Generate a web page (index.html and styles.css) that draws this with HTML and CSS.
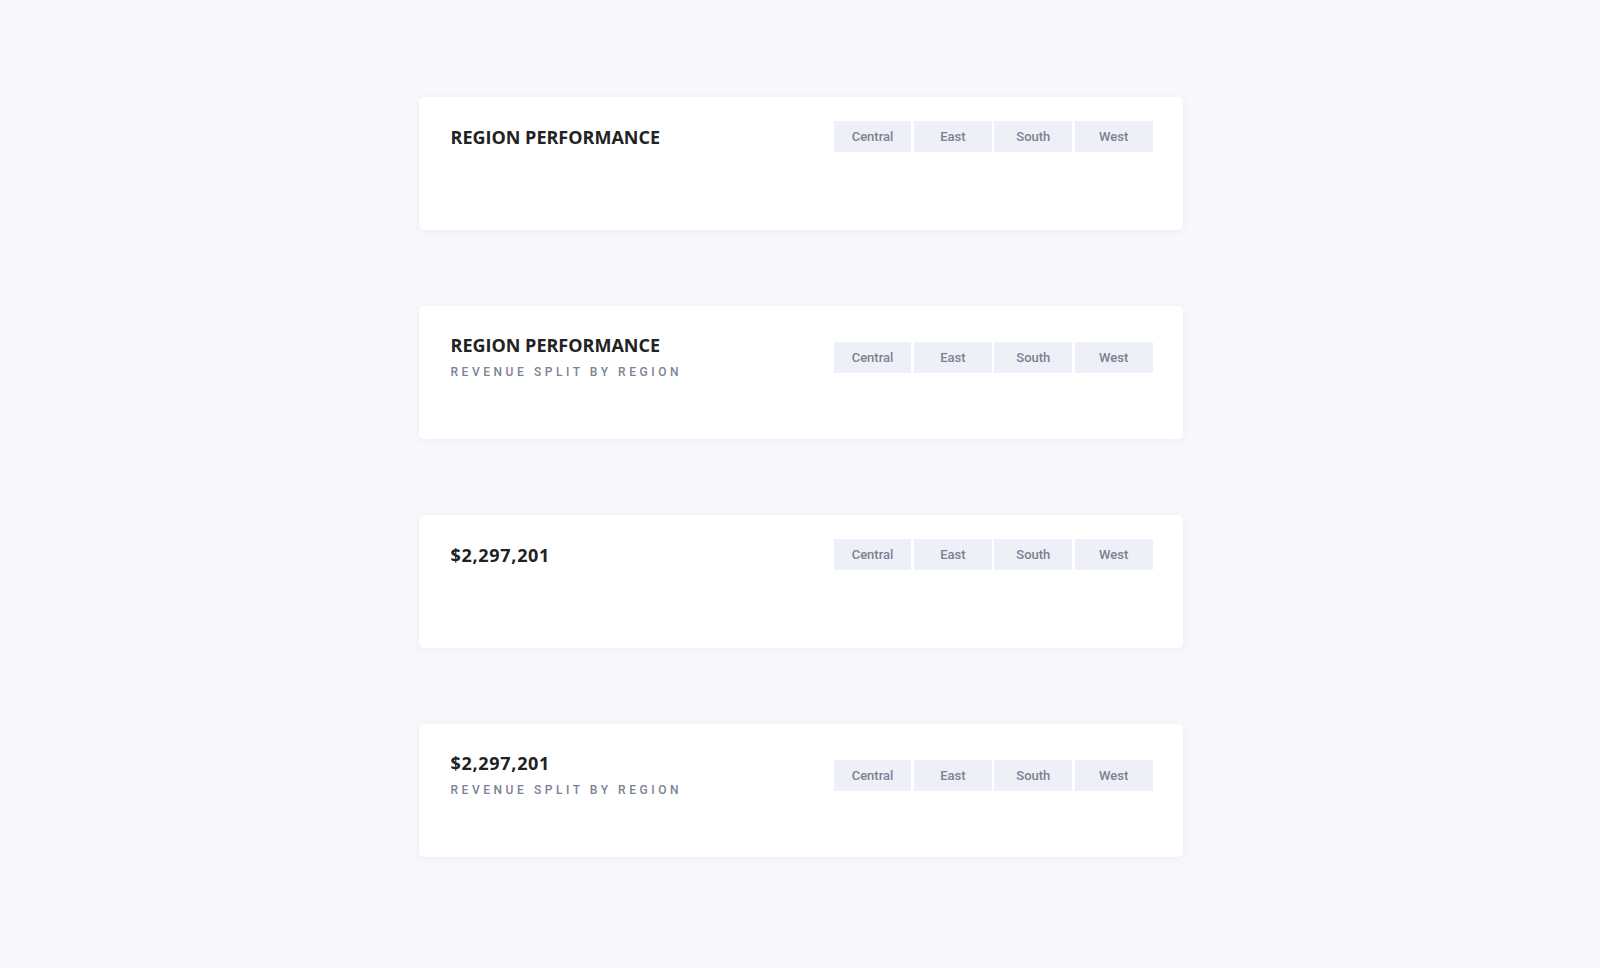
FILE: index.html
```html
<!DOCTYPE html>
<html>
<head>
<meta charset="UTF-8">
<title>Region performance</title>
<link rel="stylesheet" href="styles.css">
</head>
<body>
	<div class="page">
		<div class="card">
			<div class="head">
				<div class="titles">
					<div class="title">REGION PERFORMANCE</div>
				</div>
				<div class="tabs">
					<a class="tab">Central</a>
					<a class="tab">East</a>
					<a class="tab">South</a>
					<a class="tab">West</a>
				</div>
			</div>
		</div>
		<div class="card">
			<div class="head">
				<div class="titles">
					<div class="title">REGION PERFORMANCE</div>
					<div class="subtitle">REVENUE SPLIT BY REGION</div>
				</div>
				<div class="tabs">
					<a class="tab">Central</a>
					<a class="tab">East</a>
					<a class="tab">South</a>
					<a class="tab">West</a>
				</div>
			</div>
		</div>
		<div class="card">
			<div class="head">
				<div class="titles">
					<div class="title value">$2,297,201</div>
				</div>
				<div class="tabs">
					<a class="tab">Central</a>
					<a class="tab">East</a>
					<a class="tab">South</a>
					<a class="tab">West</a>
				</div>
			</div>
		</div>
		<div class="card">
			<div class="head">
				<div class="titles">
					<div class="title value">$2,297,201</div>
					<div class="subtitle">REVENUE SPLIT BY REGION</div>
				</div>
				<div class="tabs">
					<a class="tab">Central</a>
					<a class="tab">East</a>
					<a class="tab">South</a>
					<a class="tab">West</a>
				</div>
			</div>
		</div>
	</div>
</body>
</html>
```

FILE: styles.css
```css
html, body {
	margin: 0;
	padding: 0;
	background: #f7f8fc;
}
.page {
	display: flex;
	flex-direction: column;
	align-items: center;
	gap: 76px;
	padding: 97px 0 111px 1px;
}
.card {
	box-sizing: border-box;
	width: 764px;
	min-height: 133px;
	padding: 24px 30px 24px 32px;
	background: #fff;
	border-radius: 5px;
	box-shadow: 0 1px 8px rgba(30, 40, 80, 0.05);
}
.head {
	display: flex;
	align-items: center;
	justify-content: space-between;
}
.title {
	font-family: "Open Sans", sans-serif;
	font-weight: 700;
	font-size: 18px;
	line-height: 30px;
	color: #222;
}
.title.value {
	letter-spacing: 0.7px;
}
.subtitle {
	font-family: Roboto, sans-serif;
	font-weight: 500;
	font-size: 12px;
	line-height: 24px;
	letter-spacing: 3.55px;
	color: #7c8294;
}
.tabs {
	display: flex;
	gap: 2.7px;
}
.tab {
	width: 77.7px;
	height: 31px;
	line-height: 31px;
	text-align: center;
	background: #edf0f6;
	color: #7b8193;
	font-family: Roboto, sans-serif;
	font-weight: 500;
	font-size: 13px;
	cursor: pointer;
	user-select: none;
}
```
